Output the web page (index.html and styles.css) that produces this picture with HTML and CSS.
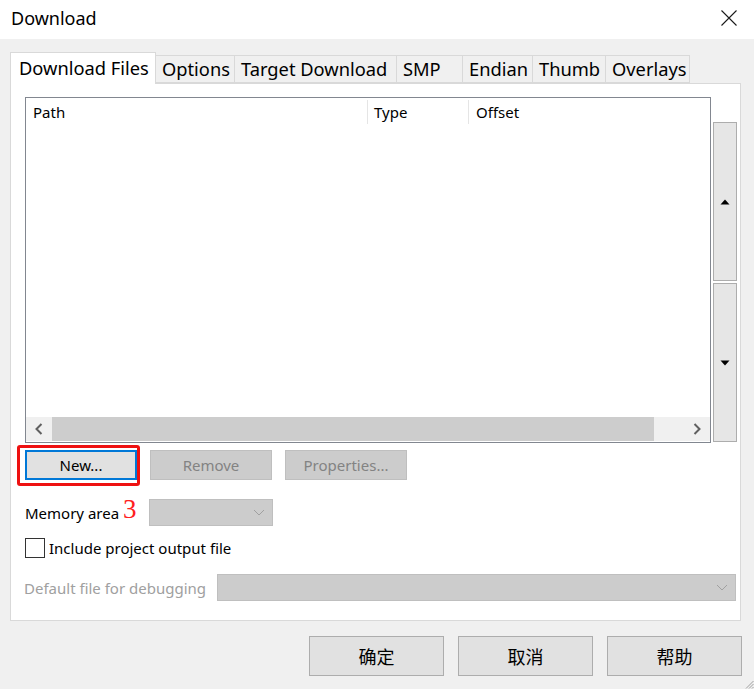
FILE: index.html
```html
<!DOCTYPE html>
<html>
<head>
  <meta charset="utf-8">
  <title>Download</title>
  <link rel="stylesheet" href="styles.css">
</head>
<body>
  <div class="titlebar">
    <span class="title">Download</span>
    <svg class="close" width="16" height="16" viewBox="0 0 16 16">
      <path d="M0.5 0.5 L15.5 15.5 M15.5 0.5 L0.5 15.5" stroke="#1a1a1a" stroke-width="1.1" fill="none"/>
    </svg>
  </div>

  <div class="dialog">
    <div class="tabs">
      <div class="tab active tab-files">Download Files</div>
      <div class="tab tab-options">Options</div>
      <div class="tab tab-target">Target Download</div>
      <div class="tab tab-smp">SMP</div>
      <div class="tab tab-endian">Endian</div>
      <div class="tab tab-thumb">Thumb</div>
      <div class="tab tab-overlays">Overlays</div>
    </div>

    <div class="panel">
      <div class="list-row">
        <div class="list">
          <div class="list-head">
            <div class="col col-path">Path</div>
            <div class="col col-type">Type</div>
            <div class="col col-offset">Offset</div>
          </div>
          <div class="list-body"></div>
          <div class="hscroll">
            <div class="hs-arrow hs-left">
              <svg width="10" height="12" viewBox="0 0 10 12"><path d="M7.5 1 L2.5 6 L7.5 11" stroke="#606060" stroke-width="2" fill="none"/></svg>
            </div>
            <div class="hs-thumb"></div>
            <div class="hs-track">
              <svg width="10" height="12" viewBox="0 0 10 12"><path d="M2.5 1 L7.5 6 L2.5 11" stroke="#606060" stroke-width="2" fill="none"/></svg>
            </div>
          </div>
        </div>
        <div class="spin">
          <div class="spin-btn">
            <svg width="10" height="6" viewBox="0 0 10 6"><path d="M5 0.5 L9.5 5.5 L0.5 5.5 Z" fill="#000"/></svg>
          </div>
          <div class="spin-btn">
            <svg width="10" height="6" viewBox="0 0 10 6"><path d="M0.5 0.5 L9.5 0.5 L5 5.5 Z" fill="#000"/></svg>
          </div>
        </div>
      </div>

      <div class="btn-row">
        <div class="marked">
          <div class="btn btn-new">New...</div>
          <div class="mark-box"></div>
        </div>
        <div class="btn btn-off btn-remove">Remove</div>
        <div class="btn btn-off btn-props">Properties...</div>
      </div>

      <div class="mem-row">
        <span class="label">Memory area</span>
        <span class="step-num">3</span>
        <div class="combo combo-mem">
          <svg width="12" height="7" viewBox="0 0 12 7"><path d="M1 1 L6 6 L11 1" stroke="#a0a0a0" stroke-width="1" fill="none"/></svg>
        </div>
      </div>

      <div class="check-row">
        <span class="checkbox"></span>
        <span class="label">Include project output file</span>
      </div>

      <div class="debug-row">
        <span class="label label-off">Default file for debugging</span>
        <div class="combo combo-debug">
          <svg width="12" height="7" viewBox="0 0 12 7"><path d="M1 1 L6 6 L11 1" stroke="#a0a0a0" stroke-width="1" fill="none"/></svg>
        </div>
      </div>
    </div>

    <div class="footer">
      <div class="btn btn-foot">确定</div>
      <div class="btn btn-foot">取消</div>
      <div class="btn btn-foot">帮助</div>
    </div>
    <svg class="grip" width="10" height="10" viewBox="0 0 10 10">
      <path d="M9.5 2 L2 9.5 M9.5 5 L5 9.5 M9.5 8 L8 9.5" stroke="#a0a0a0" stroke-width="1" fill="none"/>
    </svg>
  </div>
</body>
</html>
```

FILE: styles.css
```css
html, body {
	margin: 0;
	padding: 0;
}

body {
	width: 754px;
	height: 689px;
	overflow: hidden;
	background-color: #f0f0f0;
	font-family: "Noto Sans", "Noto Sans CJK SC", sans-serif;
	font-size: 15px;
	color: #000;
}

.titlebar {
	height: 39px;
	background-color: #fff;
	display: flex;
	align-items: center;
	justify-content: space-between;
	padding: 0 17px 0 11px;
	box-sizing: border-box;
}

.titlebar .title {
	font-size: 18px;
	margin-top: -4px;
}

.titlebar .close {
	margin-top: -4px;
}

.dialog {
	position: relative;
	height: 650px;
}

/* tabs */
.tabs {
	display: flex;
	align-items: flex-end;
	margin-left: 10px;
	padding-top: 13px;
	height: 31px;
	position: relative;
	z-index: 2;
}

.tab {
	height: 28px;
	box-sizing: border-box;
	border: 1px solid #d9d9d9;
	border-left: none;
	background-color: #f0f0f0;
	font-size: 18.3px;
	line-height: 26px;
	padding-left: 6px;
	white-space: nowrap;
}

.tab.active {
	height: 32px;
	margin-bottom: -1px;
	border-left: 1px solid #d9d9d9;
	border-bottom: none;
	background-color: #fff;
	line-height: 29px;
	padding-left: 8px;
}

.tab-files { width: 146px; }
.tab-options { width: 79px; }
.tab-target { width: 162px; }
.tab-smp { width: 66px; }
.tab-endian { width: 70px; }
.tab-thumb { width: 73px; }
.tab-overlays { width: 84px; }

/* panel */
.panel {
	margin-left: 10px;
	width: 731px;
	height: 538px;
	box-sizing: border-box;
	border: 1px solid #d9d9d9;
	background-color: #fff;
	padding: 13px 3px 0 14px;
}

.list-row {
	display: flex;
}

.list {
	width: 686px;
	height: 346px;
	box-sizing: border-box;
	border: 1px solid #828790;
	display: flex;
	flex-direction: column;
}

.list-head {
	display: flex;
	height: 29px;
}

.col {
	box-sizing: border-box;
	padding-left: 7px;
	margin: 2px 0 3px;
	line-height: 24px;
}

.col-path {
	width: 342px;
	border-right: 1px solid #e5e5e5;
}

.col-type {
	width: 101px;
	border-right: 1px solid #e5e5e5;
	padding-left: 6px;
}

.list-body {
	flex: 1;
}

.hscroll {
	display: flex;
	height: 24px;
	margin-bottom: 1px;
	background-color: #f0f0f0;
}

.hs-arrow {
	width: 26px;
	display: flex;
	align-items: center;
	justify-content: center;
}

.hs-thumb {
	width: 602px;
	background-color: #cdcdcd;
}

.hs-track {
	flex: 1;
	display: flex;
	align-items: center;
	justify-content: flex-end;
	padding-right: 8px;
}

.spin {
	margin-left: 2px;
	margin-top: 25px;
	width: 24px;
	display: flex;
	flex-direction: column;
	gap: 2px;
}

.spin-btn {
	height: 159px;
	box-sizing: border-box;
	border: 1px solid #adadad;
	background-color: #e6e6e6;
	display: flex;
	align-items: center;
	justify-content: center;
}

/* buttons */
.btn-row {
	display: flex;
	gap: 13px;
	margin-top: 7px;
}

.btn {
	height: 30px;
	box-sizing: border-box;
	border: 1px solid #adadad;
	background-color: #e1e1e1;
	display: flex;
	align-items: center;
	justify-content: center;
}

.marked {
	position: relative;
}

.btn-new {
	width: 112px;
	border: 2px solid #0078d7;
}

.mark-box {
	position: absolute;
	left: -8px;
	top: -5px;
	width: 123px;
	height: 41px;
	box-sizing: border-box;
	border: 3px solid #ee1111;
	border-radius: 3px;
}

.btn-off {
	background-color: #cccccc;
	border-color: #bfbfbf;
	color: #838383;
	width: 122px;
}

.mem-row {
	display: flex;
	align-items: center;
	margin-top: 19px;
	height: 27px;
}

.label {
	white-space: nowrap;
}

.step-num {
	font-family: "Liberation Serif", serif;
	font-size: 27px;
	color: #ff2020;
	margin: -6px 0 0 4px;
	width: 26px;
}

.combo {
	height: 27px;
	box-sizing: border-box;
	border: 1px solid #bfbfbf;
	background-color: #cccccc;
	display: flex;
	align-items: center;
	justify-content: flex-end;
	padding-right: 7px;
}

.combo-mem {
	width: 124px;
}

.check-row {
	display: flex;
	align-items: center;
	margin-top: 12px;
	height: 20px;
}

.checkbox {
	width: 20px;
	height: 20px;
	box-sizing: border-box;
	border: 1px solid #333;
	background-color: #fff;
	margin-right: 4px;
}

.debug-row {
	display: flex;
	align-items: center;
	margin-top: 16px;
	margin-left: -1px;
}

.label-off {
	color: #a0a0a0;
	width: 193px;
}

.combo-debug {
	width: 519px;
}

/* footer */
.footer {
	display: flex;
	justify-content: flex-end;
	gap: 14px;
	margin-top: 15px;
	margin-right: 12px;
}

.btn-foot {
	width: 135px;
	height: 40px;
	font-size: 18px;
}

.grip {
	position: absolute;
	right: 0;
	bottom: 0;
}
```
